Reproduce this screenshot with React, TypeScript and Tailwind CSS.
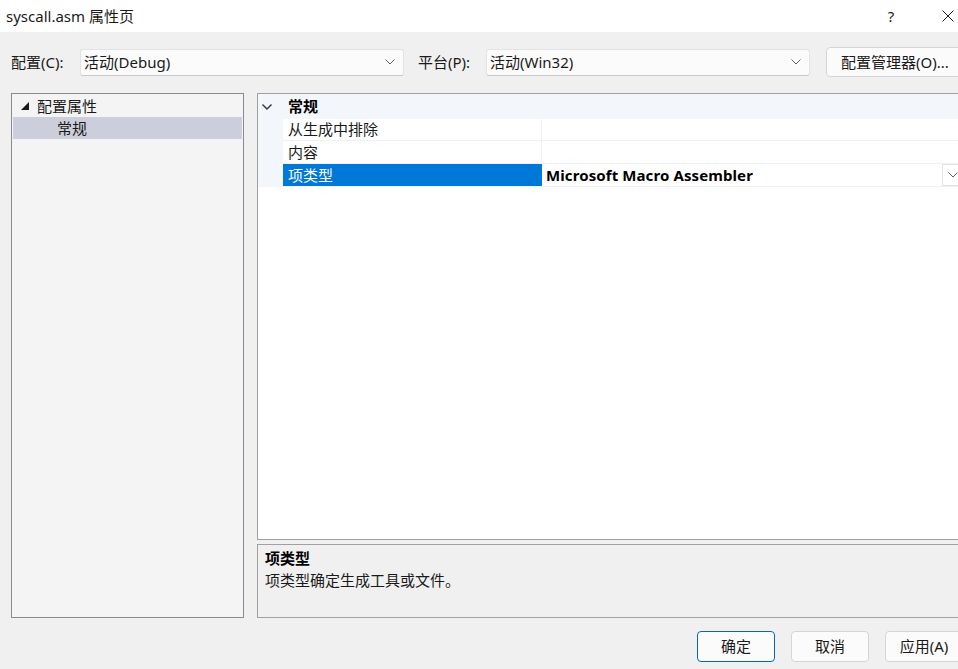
import React from "react";

const font = { fontFamily: '"Noto Sans", "Noto Sans CJK SC", sans-serif' };

function Chevron({ className = "", color = "#606060", sw = 1 }: { className?: string; color?: string; sw?: number }) {
  return (
    <svg width="10" height="6" viewBox="0 0 10 6" className={`shrink-0 ${className}`}>
      <path d="M0.5 0.5 L5 5 L9.5 0.5" fill="none" stroke={color} strokeWidth={sw} />
    </svg>
  );
}

function Combo({ text, width }: { text: string; width: string }) {
  return (
    <div
      className={`${width} shrink-0 h-[27px] bg-[#fbfbfb] border border-[#e3e3e3] border-b-[#c8c8c8] rounded-[3px] flex items-center pl-[3px] pr-[8px]`}
    >
      <span className="flex-1 text-[15px] text-[#1a1a1a]">{text}</span>
      <Chevron />
    </div>
  );
}

function Btn({ text, primary = false }: { text: string; primary?: boolean }) {
  return (
    <div
      className={`w-[78px] h-[31px] shrink-0 rounded-[4px] flex items-center justify-center text-[15px] text-[#1a1a1a] bg-[#fbfbfb] ${
        primary ? "border border-[#0067c0]" : "border border-[#d5d5d5]"
      }`}
    >
      {text}
    </div>
  );
}

export default function App() {
  return (
    <div style={font} className="w-[958px] h-[669px] bg-[#f0f0f0] flex flex-col overflow-hidden text-[#1a1a1a]">
      {/* title bar */}
      <div className="h-[32px] bg-white flex items-center shrink-0">
        <span className="pl-[6px] text-[15px] text-[#1a1a1a] flex-1">syscall.asm 属性页</span>
        <span className="text-[15px] w-[20px] mr-[41px] text-center">?</span>
        <svg width="12" height="12" viewBox="0 0 12 12" className="mr-[4px] shrink-0">
          <path d="M0.5 0.5 L11.5 11.5 M11.5 0.5 L0.5 11.5" stroke="#1a1a1a" strokeWidth="1" />
        </svg>
      </div>

      {/* config row */}
      <div className="flex items-center h-[30px] mt-[15px] shrink-0">
        <span className="pl-[11px] w-[80px] shrink-0 text-[15px]">配置(C):</span>
        <Combo text="活动(Debug)" width="w-[324px]" />
        <span className="pl-[14px] w-[82px] shrink-0 text-[15px]">平台(P):</span>
        <Combo text="活动(Win32)" width="w-[324px]" />
        <div className="ml-[16px] w-[140px] shrink-0 h-[30px] bg-[#fbfbfb] border border-[#d5d5d5] rounded-[4px] flex items-center pl-[14px] text-[15px]">
          配置管理器(O)...
        </div>
      </div>

      {/* main */}
      <div className="flex mt-[16px] h-[525px] shrink-0">
        {/* tree */}
        <div className="ml-[11px] w-[233px] shrink-0 h-[525px] bg-[#f4f4f4] border border-[#868a92] p-[1px] text-[15px]">
          <div className="h-[22px] flex items-center">
            <svg width="8" height="8" viewBox="0 0 8 8" className="ml-[8px] mr-[8px] shrink-0">
              <path d="M8 0 L8 8 L0 8 Z" fill="#1a1a1a" />
            </svg>
            <span>配置属性</span>
          </div>
          <div className="h-[22px] bg-[#cccedb] flex items-center pl-[44px]">常规</div>
        </div>

        {/* right */}
        <div className="ml-[13px] w-[710px] shrink-0 flex flex-col">
          <div className="h-[448px] bg-white border border-[#a0a0a0] text-[15px]">
            <div className="h-[25px] bg-[#f3f6fb] flex items-center">
              <Chevron className="ml-[4px] mr-[16px]" color="#333333" sw={1.4} />
              <span className="font-bold text-black">常规</span>
            </div>
            <div className="bg-[#f3f6fb] pl-[25px]">
              <div className="flex h-[22px] border-b border-[#eef1f5] bg-white">
                <div className="w-[259px] pl-[5px] flex items-center border-r border-[#eef1f5]">从生成中排除</div>
                <div className="flex-1" />
              </div>
              <div className="flex h-[23px] border-b border-[#eef1f5] bg-white">
                <div className="w-[259px] pl-[5px] flex items-center border-r border-[#eef1f5]">内容</div>
                <div className="flex-1" />
              </div>
              <div className="flex h-[23px] bg-white border-b border-[#eef1f5]">
                <div className="w-[259px] pl-[5px] flex items-center bg-[#0078d7] text-white">项类型</div>
                <div className="flex-1 flex items-center pl-[4px] font-bold text-[15px] text-black tracking-[0.1px]">
                  Microsoft Macro Assembler
                </div>
                <div className="w-[22px] mr-[2px] h-[22px] border border-[#e3e3e3] bg-white flex items-center justify-center">
                  <Chevron />
                </div>
              </div>
            </div>
          </div>
          <div className="mt-[4px] h-[74px] border border-[#a0a0a0] bg-[#f0f0f0] pl-[7px] pt-[2px] text-[15px]">
            <div className="font-bold h-[22px] flex items-center text-black">项类型</div>
            <div className="h-[22px] flex items-center">项类型确定生成工具或文件。</div>
          </div>
        </div>
      </div>

      {/* buttons */}
      <div className="flex mt-[13px] pl-[697px] gap-[16px] shrink-0">
        <Btn text="确定" primary />
        <Btn text="取消" />
        <Btn text="应用(A)" />
      </div>
    </div>
  );
}
